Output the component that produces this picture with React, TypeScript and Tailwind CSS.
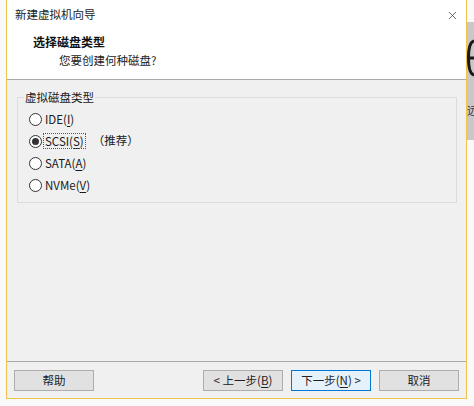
import { X } from "lucide-react"

const font = { fontFamily: '"Noto Sans CJK SC", "Noto Sans", sans-serif' }

function Radio({ checked, label, mnemonic, extra, focused }: { checked?: boolean; label: string; mnemonic: string; extra?: string; focused?: boolean }) {
  return (
    <div className="flex h-[22px] items-center">
      <span className="flex h-[13px] w-[13px] items-center justify-center rounded-full border border-[#333333] bg-white">
        {checked && <span className="h-[7px] w-[7px] rounded-full bg-[#333333]" />}
      </span>
      <span className={focused ? "ml-[2px] px-[1px] leading-[14px] outline outline-1 outline-dotted outline-[#555555]" : "ml-[3px] leading-[14px]"}>
        {label}(<span className="underline underline-offset-2">{mnemonic}</span>)
      </span>
      {extra && <span className="ml-[8px]">{extra}</span>}
    </div>
  )
}

function Btn({ children, primary }: { children: React.ReactNode; primary?: boolean }) {
  return (
    <button
      className={
        primary
          ? "flex h-[21px] w-[80px] items-center justify-center border border-[#0078d7] bg-[#e5f1fb] text-[11.5px] text-[#222]"
          : "flex h-[21px] w-[80px] items-center justify-center border border-[#adadad] bg-[#e1e1e1] text-[11.5px] text-[#222]"
      }
    >
      {children}
    </button>
  )
}

export default function App() {
  return (
    <div className="flex h-[406px] w-[474px] bg-[#f9f9f9] text-[#1a1a1a]" style={font}>
      <div className="ml-[6px] flex h-[399px] w-[462px] flex-col border-x border-b border-[#efc44c] bg-[#f0f0f0]">
        {/* title bar */}
        <div className="flex h-[30px] items-center justify-between bg-white pl-[8px] pr-[6px]">
          <span className="text-[11.5px] text-[#222]">新建虚拟机向导</span>
          <X className="mr-[1px] h-[13px] w-[13px] text-[#333]" strokeWidth={1.3} />
        </div>

        {/* header */}
        <div className="flex h-[50px] flex-col border-b border-[#a9a9a9] bg-white pl-[26px]">
          <span className="mt-[3px] text-[12px] font-bold leading-[18px] text-[#111]">选择磁盘类型</span>
          <span className="pl-[26px] text-[11.5px] leading-[18px]">您要创建何种磁盘?</span>
        </div>

        {/* body */}
        <div className="flex flex-1 flex-col px-[9px] pt-[17px]">
          <div className="relative ml-[1px] h-[106px] border border-[#dcdcdc]">
            <span className="absolute -top-[9px] left-[6px] bg-[#f0f0f0] px-[1px] text-[11.5px] leading-[16px]">虚拟磁盘类型</span>
            <div className="flex flex-col pl-[11px] pt-[10px] text-[11.5px]">
              <Radio label="IDE" mnemonic="I" />
              <Radio checked focused label="SCSI" mnemonic="S" extra="（推荐）" />
              <Radio label="SATA" mnemonic="A" />
              <Radio label="NVMe" mnemonic="V" />
            </div>
          </div>
        </div>

        {/* footer */}
        <div className="flex h-[37px] items-start border-t border-[#a9a9a9] px-[7px] pt-[8px]">
          <Btn>帮助</Btn>
          <div className="ml-auto flex gap-[8px]">
            <Btn>&lt; 上一步(<span className="underline underline-offset-2">B</span>)</Btn>
            <Btn primary>
              下一步(<span className="underline underline-offset-2">N</span>) &gt;
            </Btn>
            <Btn>取消</Btn>
          </div>
        </div>
      </div>

      {/* neighbouring window edge */}
      <div className="flex flex-1 flex-col">
        <div className="h-[22px]" />
        <div className="flex h-[118px] flex-col overflow-hidden bg-[#c8c8c8]">
          <svg width="7" height="40" viewBox="0 0 7 40" className="mt-[16px]">
            <path d="M7 3 C3 4 1.5 10 1.5 20 C1.5 30 3 36 7 37" fill="none" stroke="#1a1a1a" strokeWidth="3" />
            <path d="M1.5 20 H7" stroke="#1a1a1a" strokeWidth="3" />
          </svg>
          <span className="mt-[27px] w-[7px] overflow-hidden text-[11px] leading-none text-[#333]">远</span>
        </div>
      </div>
    </div>
  )
}
